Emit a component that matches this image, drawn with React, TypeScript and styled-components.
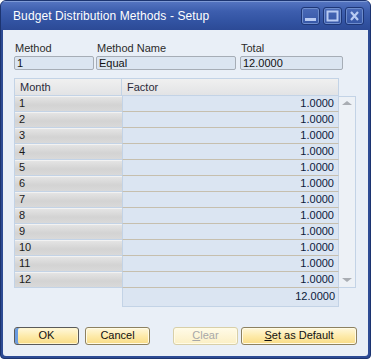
import React from "react";
import styled, { createGlobalStyle } from "styled-components";

const Global = createGlobalStyle`
  html, body { margin: 0; padding: 0; background: #ffffff; }
  body { width: 371px; height: 359px; overflow: hidden; }
  * { box-sizing: border-box; }
`;

const Window = styled.div`
  width: 371px;
  height: 359px;
  display: flex;
  flex-direction: column;
  background: #2d4b94;
  border: 1px solid #1c3470;
  border-radius: 6px 6px 4px 4px;
  overflow: hidden;
  font-family: "Liberation Sans", Arial, sans-serif;
`;

const TitleBar = styled.div`
  height: 29px;
  flex: none;
  display: flex;
  align-items: center;
  padding: 0 6px 0 12px;
  background: linear-gradient(#5676c2 0%, #3d5eae 35%, #3253a2 70%, #2c4a96 100%);
  box-shadow: inset 0 1px 0 #7e9ad6;
`;

const Title = styled.div`
  flex: 1;
  color: #ffffff;
  font-size: 12px;
  letter-spacing: 0.1px;
  padding-top: 1px;
`;

const TitleButtons = styled.div`
  display: flex;
  gap: 3px;
`;

const TitleButton = styled.div`
  width: 19px;
  height: 18px;
  border: 1px solid #1e3676;
  border-radius: 3px;
  background: linear-gradient(#4a6ab8, #3556a6);
  box-shadow: inset 0 0 0 1px #6d8ccc;
  display: flex;
  align-items: center;
  justify-content: center;
`;

const Content = styled.div`
  flex: 1;
  margin: 0 2px 2px 2px;
  background: #e9eff7;
  border-radius: 0 0 3px 3px;
  padding: 11px 0 0 11px;
  display: flex;
  flex-direction: column;
`;

const FieldRow = styled.div`
  display: flex;
  gap: 2px;
`;

const Field = styled.div<{ $w: number; $ml?: number }>`
  width: ${(p) => p.$w}px;
  margin-left: ${(p) => p.$ml ?? 0}px;
  display: flex;
  flex-direction: column;
`;

const Label = styled.div`
  font-size: 11px;
  color: #2b2b2b;
  height: 15px;
  line-height: 14px;
  padding-left: 1px;
`;

const Input = styled.div`
  height: 14px;
  border: 1px solid #a6adb6;
  border-radius: 2px;
  background: #dbe5f1;
  font-size: 11px;
  line-height: 12px;
  padding-left: 2px;
  color: #111;
`;

const Grid = styled.div`
  margin-top: 8px;
  display: grid;
  grid-template-columns: 108px 217px 17px;
  grid-template-rows: 18px repeat(12, 16px) 19px;
`;

const HeaderCell = styled.div<{ $first?: boolean }>`
  background: linear-gradient(#f0f0f0, #e2e3e5);
  border: 1px solid #c3d3e6;
  border-left-width: ${(p) => (p.$first ? 1 : 0)}px;
  font-size: 11px;
  color: #2a2a3a;
  padding: 2px 0 0 5px;
`;

const HeaderGap = styled.div``;

const MonthCell = styled.div`
  border-left: 1px solid #c3d3e6;
  border-bottom: 1px solid #c3d3e6;
  background: linear-gradient(#e6e6e6, #d3d3d3 60%, #d9d9d9);
  box-shadow: inset 0 1px 0 #f2f2f2;
  font-size: 11px;
  color: #1a1a1a;
  padding: 1px 0 0 4px;
`;

const FactorCell = styled.div`
  background: #dbe5f2;
  border-left: 1px solid #c3d3e6;
  border-right: 1px solid #c3d3e6;
  border-bottom: 1px solid #c6bfae;
  font-size: 11px;
  color: #0c1a3a;
  text-align: right;
  padding: 1px 4px 0 0;
`;

const Scrollbar = styled.div`
  grid-column: 3;
  grid-row: 2 / span 12;
  border: 1px solid #c3d3e6;
  border-left: 0;
  background: #edf1f6;
  display: flex;
  flex-direction: column;
  justify-content: space-between;
  align-items: center;
  padding: 4px 0 5px;
`;

const Arrow = styled.div<{ $up?: boolean }>`
  width: 0;
  height: 0;
  border-left: 5px solid transparent;
  border-right: 5px solid transparent;
  ${(p) => (p.$up ? "border-bottom: 4px solid #a9adb3;" : "border-top: 4px solid #a9adb3;")}
`;

const Spacer = styled.div``;

const TotalCell = styled.div`
  grid-column: 2;
  background: #dbe5f2;
  border: 1px solid #c3d3e6;
  border-top: 0;
  font-size: 11px;
  color: #0c1a3a;
  text-align: right;
  padding: 2px 3px 0 0;
`;

const ButtonRow = styled.div`
  margin-top: 20px;
  display: flex;
`;

const Button = styled.div<{ $w: number; $ml?: number; $disabled?: boolean; $default?: boolean }>`
  width: ${(p) => p.$w}px;
  margin-left: ${(p) => p.$ml ?? 0}px;
  height: 18px;
  border: 1px solid ${(p) => (p.$default ? "#5a5a5a" : p.$disabled ? "#d8cfa8" : "#8d8160")};
  border-radius: 3px;
  background: ${(p) =>
    p.$disabled
      ? "linear-gradient(#fffbe8, #fbefc4)"
      : "linear-gradient(#fff8dc, #fde9a6 55%, #f9dc86)"};
  box-shadow: ${(p) => (p.$default ? "inset 3px 0 0 #6a9be0, inset 0 0 0 1px #fff6d0" : "inset 0 0 0 1px #fffbe6")};
  font-size: 11px;
  line-height: 15px;
  text-align: center;
  color: ${(p) => (p.$disabled ? "#a8a8a8" : "#111")};
`;

const U = styled.span`
  text-decoration: underline;
`;

const months = Array.from({ length: 12 }, (_, i) => i + 1);

export default function App() {
  return (
    <>
      <Global />
      <Window>
        <TitleBar>
          <Title>Budget Distribution Methods - Setup</Title>
          <TitleButtons>
            <TitleButton>
              <svg width="13" height="12" viewBox="0 0 13 12">
                <rect x="1" y="8" width="11" height="3" fill="#b9cbf2" />
              </svg>
            </TitleButton>
            <TitleButton>
              <svg width="13" height="12" viewBox="0 0 13 12">
                <rect x="1.5" y="1.5" width="10" height="9" fill="none" stroke="#b9cbf2" strokeWidth="2" />
              </svg>
            </TitleButton>
            <TitleButton>
              <svg width="13" height="12" viewBox="0 0 13 12">
                <path d="M3 2 L10 10 M10 2 L3 10" stroke="#b9cbf2" strokeWidth="2.2" />
              </svg>
            </TitleButton>
          </TitleButtons>
        </TitleBar>
        <Content>
          <FieldRow>
            <Field $w={80}>
              <Label>Method</Label>
              <Input>1</Input>
            </Field>
            <Field $w={140}>
              <Label>Method Name</Label>
              <Input>Equal</Input>
            </Field>
            <Field $w={103} $ml={2}>
              <Label>Total</Label>
              <Input>12.0000</Input>
            </Field>
          </FieldRow>
          <Grid>
            <HeaderCell $first>Month</HeaderCell>
            <HeaderCell>Factor</HeaderCell>
            <HeaderGap />
            {months.map((m) => (
              <React.Fragment key={m}>
                <MonthCell style={{ gridRow: m + 1, gridColumn: 1 }}>{m}</MonthCell>
                <FactorCell style={{ gridRow: m + 1, gridColumn: 2 }}>1.0000</FactorCell>
              </React.Fragment>
            ))}
            <Scrollbar>
              <Arrow $up />
              <Arrow />
            </Scrollbar>
            <Spacer style={{ gridRow: 14, gridColumn: 1 }} />
            <TotalCell style={{ gridRow: 14 }}>12.0000</TotalCell>
          </Grid>
          <ButtonRow>
            <Button $w={65} $default>OK</Button>
            <Button $w={65} $ml={6}>Cancel</Button>
            <Button $w={65} $ml={23} $disabled>
              <U>C</U>lear
            </Button>
            <Button $w={116} $ml={3}>
              <U>S</U>et as Default
            </Button>
          </ButtonRow>
        </Content>
      </Window>
    </>
  );
}
